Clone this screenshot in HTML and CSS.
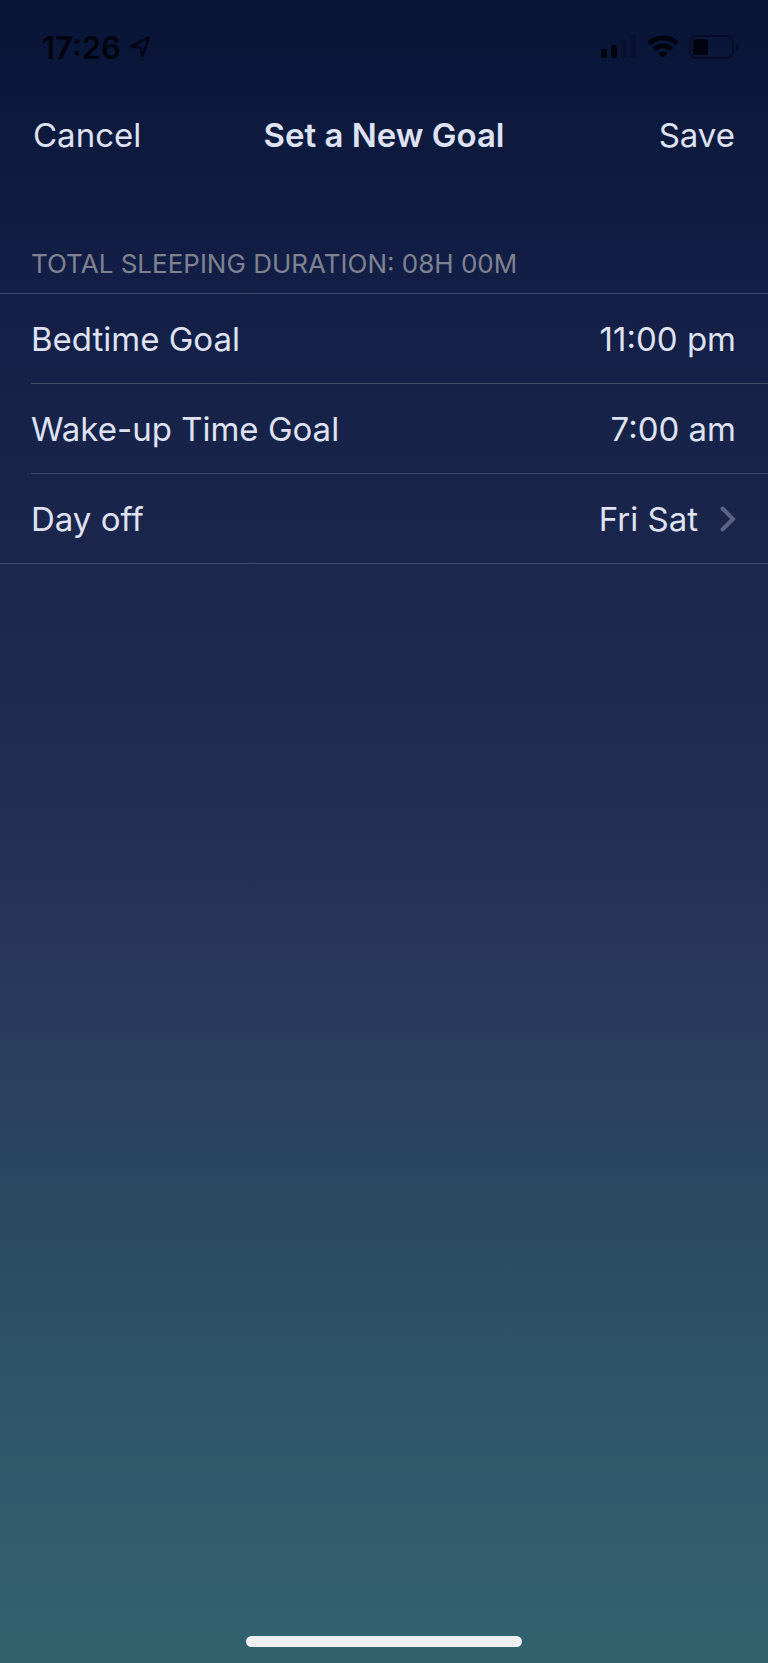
FILE: index.html
```html
<!DOCTYPE html>
<html lang="en">
    <head>
        <meta charset="utf-8" />
        <meta name="viewport" content="width=device-width, initial-scale=1" />
        <title>Set a New Goal</title>
        <link rel="stylesheet" href="styles.css">
    </head>
    <body>
        <div class="screen">
            <div class="status">
                <div class="status__left">
                    <span class="status__time">17:26</span>
                    <svg class="status__location" width="22" height="22" viewBox="0 0 22 22" aria-hidden="true">
                        <path d="M2 10.5 L20 1.5 L13.5 20 L11.5 11.5 Z" fill="none" stroke="#02061a" stroke-width="2.6" stroke-linejoin="round"/>
                    </svg>
                </div>
                <div class="status__right">
                    <svg width="36" height="24" viewBox="0 0 36 24" aria-hidden="true">
                        <rect x="0" y="14" width="6" height="9" rx="2" fill="#01030f"/>
                        <rect x="10" y="10" width="6" height="13" rx="2" fill="#01030f"/>
                        <rect x="20" y="5" width="6" height="18" rx="2" fill="#071130"/>
                        <rect x="29" y="0" width="6" height="23" rx="2" fill="#071130"/>
                    </svg>
                    <svg width="32" height="24" viewBox="0 0 32 24" aria-hidden="true">
                        <g fill="none" stroke="#01030f" stroke-width="4.8">
                            <path d="M2 8.5 A20 20 0 0 1 30 8.5"/>
                            <path d="M7.4 14.4 A12.4 12.4 0 0 1 24.6 14.4"/>
                        </g>
                        <path d="M16 23 L11.3 18.3 A6.8 6.8 0 0 1 20.7 18.3 Z" fill="#01030f"/>
                    </svg>
                    <svg width="51" height="24" viewBox="0 0 51 24" aria-hidden="true">
                        <rect x="1" y="1" width="43" height="22" rx="6" fill="none" stroke="#050d2a" stroke-width="2"/>
                        <rect x="4" y="4" width="15" height="16" rx="3" fill="#01030f"/>
                        <path d="M47 8 Q50 9 50 12 Q50 15 47 16 Z" fill="#050d2a"/>
                    </svg>
                </div>
            </div>
            <header class="navbar">
                <button type="button" class="navbar__button">Cancel</button>
                <h1 class="navbar__title">Set a New Goal</h1>
                <button type="button" class="navbar__button navbar__button--save">Save</button>
            </header>
            <main class="goals">
                <h2 class="goals__heading">TOTAL SLEEPING DURATION: 08H 00M</h2>
                <ul class="goals__list">
                    <li>
                        <button type="button" class="row">
                            <span>Bedtime Goal</span>
                            <span>11:00 pm</span>
                        </button>
                    </li>
                    <li>
                        <button type="button" class="row">
                            <span>Wake-up Time Goal</span>
                            <span>7:00 am</span>
                        </button>
                    </li>
                    <li>
                        <a class="row" href="#">
                            <span>Day off</span>
                            <span class="row__value">
                                Fri Sat
                                <svg width="16" height="26" viewBox="0 0 16 26" aria-hidden="true">
                                    <path d="M2.5 2.5 L13 13 L2.5 23.5" fill="none" stroke="#5b6483" stroke-width="4" stroke-linecap="round"/>
                                </svg>
                            </span>
                        </a>
                    </li>
                </ul>
            </main>
            <div class="home-bar"></div>
        </div>
    </body>
</html>
```
FILE: styles.css
```css
*,*::before,*::after{
    box-sizing: border-box;
}
body{
    margin:0;
    font-family: Inter, "Liberation Sans", sans-serif;
    font-size: 33px;
    color:#dfe2f2;
}
button{
    padding:0;
    border:0;
    background:none;
    font:inherit;
    color:inherit;
    cursor:pointer;
}
.screen{
    display:flex;
    flex-direction: column;
    min-height:100vh;
    background:linear-gradient(#081536 0%, #121e45 16%, #1c274d 35%, #222d54 48%, #28395b 60%, #2b4861 72%, #2f5769 86%, #33626f 100%);
}
.status{
    display:flex;
    justify-content: space-between;
    align-items: center;
    height:94px;
    padding:0 28px 0 42px;
}
.status__left,.status__right{
    display:flex;
    align-items: center;
}
.status__left{
    gap:8px;
    color:#01030f;
}
.status__right{
    gap:10px;
}
.status__time{
    font-size:31px;
    font-weight:600;
}
.navbar{
    display:grid;
    grid-template-columns: 1fr auto 1fr;
    align-items: center;
    height:82px;
    padding:0 33px;
}
.navbar__button{
    justify-self: start;
}
.navbar__button--save{
    justify-self: end;
}
.navbar__title{
    margin:0;
    font-size:33px;
    font-weight:600;
}
.goals{
    flex:1;
}
.goals__heading{
    margin:0;
    padding:72px 31px 13px;
    font-size:26px;
    line-height:32px;
    font-weight:400;
    color:#7f8290;
}
.goals__list{
    margin:0;
    padding:0;
    list-style:none;
    border-top:1px solid #424a6b;
}
.goals__list li{
    padding-left:31px;
}
.row{
    display:flex;
    justify-content: space-between;
    align-items: center;
    width:100%;
    height:90px;
    padding-right:32px;
    border-bottom:1px solid #424a6b;
    color:inherit;
    text-decoration:none;
}
/* the last separator runs edge to edge */
.goals__list li:last-child{
    padding-left:0;
}
.goals__list li:last-child .row{
    padding-left:31px;
}
.row__value{
    display:flex;
    align-items: center;
    gap:22px;
}
.home-bar{
    width:36%;
    height:11px;
    margin:0 auto 16px;
    border-radius:6px;
    background:#eeeff0;
}
```
